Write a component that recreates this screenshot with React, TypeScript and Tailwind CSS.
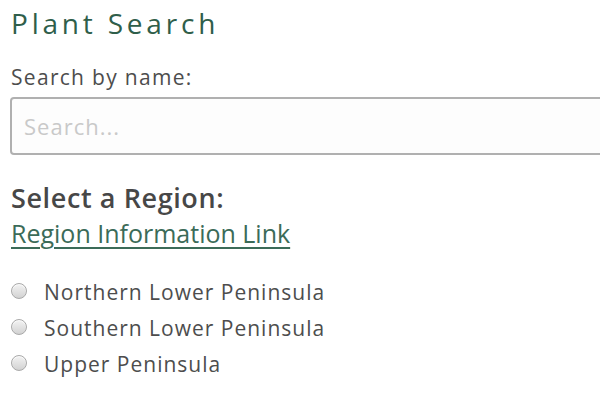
const regions = ["Northern Lower Peninsula", "Southern Lower Peninsula", "Upper Peninsula"];

export default function App() {
  return (
    <div className="min-h-screen overflow-hidden bg-white pl-[10px] pt-[4px] font-['Open_Sans',sans-serif] text-[#4d4d4d]">
      <h1 className="pl-[1px] text-[28px] leading-[38px] tracking-[3.8px] text-[#2f5e4a]">Plant Search</h1>
      <label className="mt-[21px] block pl-[1px] text-[21px] leading-[28px] tracking-[1.3px]">Search by name:</label>
      <input
        type="text"
        placeholder="Search..."
        className="mt-[6px] block h-[58px] w-[640px] rounded-[4px] border-2 border-[#b0b0b0] bg-[#fdfdfd] px-[12px] text-[22px] tracking-[1px] outline-none placeholder:text-[#c9c9c9]"
      />
      <h2 className="mt-[26px] pl-[1px] text-[27px] font-semibold leading-[34px] tracking-[0.6px] text-[#474747]">Select a Region:</h2>
      <a href="#" className="mt-[2px] block w-fit pl-[1px] text-[25px] leading-[32px] text-[#3b6b58] underline decoration-[1.5px] underline-offset-[4px]">
        Region Information Link
      </a>
      <div className="mt-[29px] flex flex-col gap-[8px]">
        {regions.map((r) => (
          <label key={r} className="flex items-start gap-[17px] text-[21px] leading-[28px] tracking-[1px]">
            <span className="ml-[1px] mt-[5px] block h-[16px] w-[16px] shrink-0 rounded-full border border-[#a9a9a9] bg-[linear-gradient(to_bottom,#f3f3f3,#d2d2d2)] shadow-[inset_0_1px_1px_rgba(255,255,255,0.8)]" />
            {r}
          </label>
        ))}
      </div>
    </div>
  );
}
